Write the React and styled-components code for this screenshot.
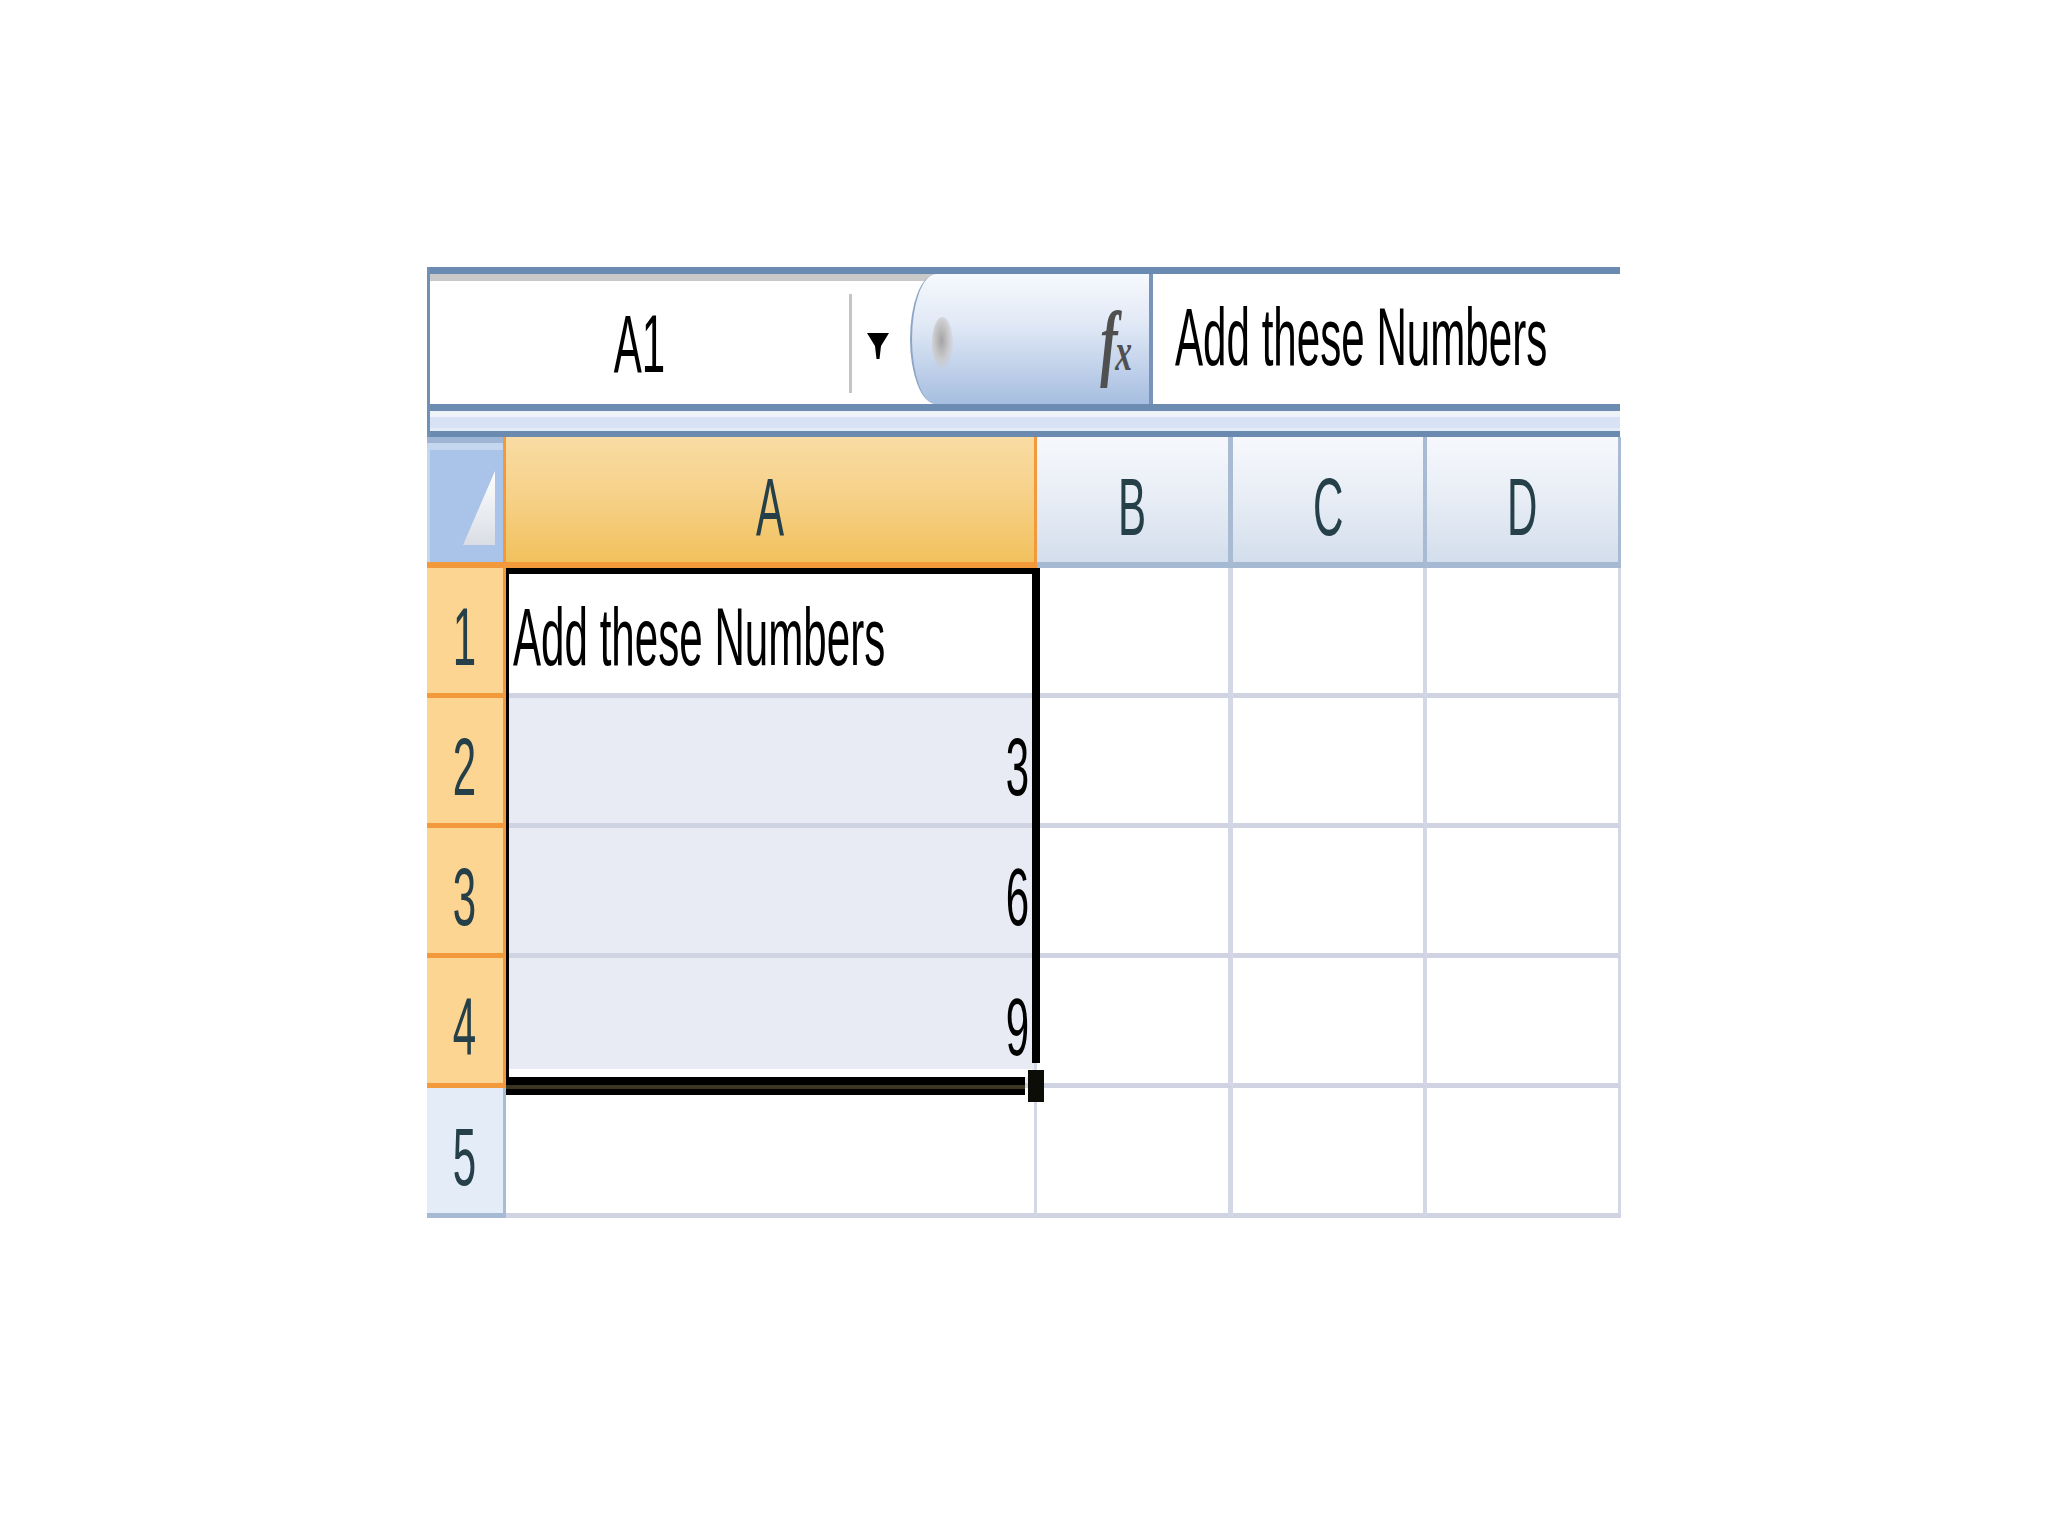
import React from "react";
import styled, { createGlobalStyle } from "styled-components";

const GlobalStyle = createGlobalStyle`
  html, body { margin: 0; padding: 0; background: #ffffff; }
  body { font-family: "Liberation Sans", Arial, sans-serif; }
`;

const Page = styled.div`
  padding-top: 267px;
  display: flex;
  justify-content: center;
`;

const Sheet = styled.div`
  width: 1194px;
  display: flex;
  flex-direction: column;
`;

const FormulaArea = styled.div`
  width: 1190px;
  border-left: 3px solid #7090b6;
  display: flex;
  flex-direction: column;
`;

const FormulaBar = styled.div`
  display: flex;
  height: 130px;
  border-top: 7px solid #6a8ab1;
  border-bottom: 7px solid #6c8cb2;
  background: linear-gradient(#c9c9c9 0 7px, #ffffff 7px);
`;

const NameBox = styled.div`
  width: 480px;
  flex: none;
  display: flex;
  align-items: center;
`;

const NameText = styled.div`
  width: 419px;
  display: flex;
  justify-content: center;
  padding-top: 10px;
  box-sizing: border-box;
`;

const Separator = styled.div`
  width: 3px;
  height: 99px;
  margin-top: 8px;
  background: #c4c4c4;
`;

const ArrowWrap = styled.div`
  padding-left: 15px;
  margin-top: 14px;
  display: flex;
`;

const FxButton = styled.div`
  width: 243px;
  flex: none;
  box-sizing: border-box;
  display: flex;
  align-items: center;
  justify-content: space-between;
  padding: 0 17px 0 20px;
  border-right: 4px solid #7994ba;
  border-left: 2px solid #8ca5c6;
  border-radius: 26px 0 0 26px / 65px 0 0 65px;
  background: linear-gradient(#f6f9fd 0%, #e1e9f6 38%, #a6bee0 100%);
`;

const Knob = styled.div`
  width: 21px;
  height: 52px;
  margin-top: 8px;
  border-radius: 50%;
  background: radial-gradient(ellipse at 45% 45%, #a4a4a4 0%, #c9c9cb 45%, rgba(230, 234, 240, 0) 78%);
`;

const FxGlyph = styled.div`
  display: flex;
  align-items: baseline;
  font-family: "Liberation Serif", "Times New Roman", serif;
  font-style: italic;
  font-weight: bold;
  color: #505050;
  transform: scaleX(0.62);
  transform-origin: right center;
  margin-top: 6px;
  line-height: 1;
`;

const FxF = styled.span`
  font-size: 84px;
`;

const FxX = styled.span`
  font-size: 54px;
  margin-left: -4px;
`;

const FormulaInput = styled.div`
  flex: 1;
  background: #ffffff;
  display: flex;
  align-items: center;
  padding: 0 0 4px 22px;
`;

const Strip = styled.div`
  height: 20px;
  background: linear-gradient(#eef3fa 0 6px, #d7e3f4 6px 17px, #e4ecf7 17px);
  border-bottom: 6px solid #6a8ab0;
`;

const Label = styled.span`
  display: inline-block;
  font-family: "Liberation Sans", Arial, sans-serif;
  font-size: 81px;
  line-height: 1;
  white-space: nowrap;
  color: ${(p) => p.$color || "#000000"};
  transform: scaleX(0.52);
  transform-origin: ${(p) => p.$origin || "center"} center;
`;

const GridWrap = styled.div`
  position: relative;
`;

const Grid = styled.div`
  display: grid;
  grid-template-columns: 79px 531px 196px 194px 194px;
  grid-template-rows: 131px repeat(5, 130px);
`;

const Corner = styled.div`
  box-sizing: border-box;
  border-right: 3px solid #f2993c;
  border-bottom: 6px solid #f2993c;
  background: #a9c3e9;
  box-shadow: inset 0 6px 0 #9fb5d5, inset 0 13px 0 #c5d6ef, inset 3px 0 0 #c5d6ef;
  display: flex;
  align-items: flex-end;
  justify-content: flex-end;
  padding: 0 8px 17px 0;
`;

const CornerTriangle = styled.div`
  width: 32px;
  height: 74px;
  background: linear-gradient(#ffffff, #d9dde4);
  clip-path: polygon(100% 0, 100% 100%, 0 100%);
`;

const ColHeader = styled.div`
  box-sizing: border-box;
  display: flex;
  align-items: center;
  justify-content: center;
  padding-top: 15px;
  border-right: ${(p) => p.$br}px solid ${(p) => (p.$sel ? "#f2993c" : "#a9bbd3")};
  border-bottom: 6px solid ${(p) => (p.$sel ? "#f2993c" : "#a6b9d2")};
  background: ${(p) =>
    p.$sel
      ? "linear-gradient(#f9dca4 0%, #f6d086 50%, #f1c15d 100%)"
      : "linear-gradient(#f6f8fc 0%, #e9eef6 45%, #d3deec 100%)"};
`;

const RowHeader = styled.div`
  box-sizing: border-box;
  display: flex;
  align-items: center;
  justify-content: center;
  padding-top: 14px;
  border-right: 3px solid ${(p) => (p.$sel ? "#f2993c" : "#a8bcd6")};
  border-bottom: 5px solid ${(p) => (p.$sel ? "#f2993c" : "#a7bad3")};
  background: ${(p) => (p.$sel ? "#fdd592" : "#e4ecf7")};
`;

const Cell = styled.div`
  box-sizing: border-box;
  display: flex;
  align-items: center;
  justify-content: ${(p) => (p.$align === "right" ? "flex-end" : "flex-start")};
  padding: 14px 5px 0 7px;
  border-right: ${(p) => p.$br}px solid #d4d8e6;
  border-bottom: 5px solid #d0d4e2;
  background: ${(p) => (p.$tint ? "#e8ebf4" : "#ffffff")};
`;

const Selection = styled.div`
  position: absolute;
  left: 79px;
  top: 131px;
  width: 534px;
  height: 527px;
  pointer-events: none;
`;

const SelEdge = styled.div`
  position: absolute;
  background: ${(p) => p.$bg || "#000000"};
`;

const header = { color: "#26404a" };

const columns = [
  { key: "A", br: 3 },
  { key: "B", br: 5 },
  { key: "C", br: 4 },
  { key: "D", br: 3 },
];

const rows = [
  { n: 1, sel: true, A: { text: "Add these Numbers", align: "left" } },
  { n: 2, sel: true, A: { text: "3", align: "right", tint: true } },
  { n: 3, sel: true, A: { text: "6", align: "right", tint: true } },
  { n: 4, sel: true, A: { text: "9", align: "right", tint: true } },
  { n: 5, sel: false },
];

function DropArrow() {
  return (
    <svg width="22" height="26" viewBox="0 0 22 26">
      <polygon points="0,0 22,0 14,13 12.5,26 9.5,26 8,13" fill="#000" />
    </svg>
  );
}

export default function App() {
  return (
    <>
      <GlobalStyle />
      <Page>
        <Sheet>
          <FormulaArea>
            <FormulaBar>
              <NameBox>
                <NameText>
                  <Label>A1</Label>
                </NameText>
                <Separator />
                <ArrowWrap>
                  <DropArrow />
                </ArrowWrap>
              </NameBox>
              <FxButton>
                <Knob />
                <FxGlyph>
                  <FxF>f</FxF>
                  <FxX>x</FxX>
                </FxGlyph>
              </FxButton>
              <FormulaInput>
                <Label $origin="left">Add these Numbers</Label>
              </FormulaInput>
            </FormulaBar>
            <Strip />
          </FormulaArea>
          <GridWrap>
            <Grid>
              <Corner>
                <CornerTriangle />
              </Corner>
              {columns.map((c) => (
                <ColHeader key={c.key} $br={c.br} $sel={c.key === "A"}>
                  <Label $color={header.color}>{c.key}</Label>
                </ColHeader>
              ))}
              {rows.map((r) => (
                <React.Fragment key={r.n}>
                  <RowHeader $sel={r.sel}>
                    <Label $color={header.color}>{r.n}</Label>
                  </RowHeader>
                  {columns.map((c) => {
                    const v = r[c.key];
                    return (
                      <Cell key={c.key} $br={c.br} $align={v?.align} $tint={v?.tint}>
                        {v && (
                          <Label $origin={v.align === "right" ? "right" : "left"}>{v.text}</Label>
                        )}
                      </Cell>
                    );
                  })}
                </React.Fragment>
              ))}
            </Grid>
            <Selection>
              <SelEdge style={{ left: 0, top: 0, width: 534, height: 6 }} />
              <SelEdge style={{ left: 0, top: 0, width: 3, height: 527 }} />
              <SelEdge style={{ left: 526, top: 0, width: 8, height: 495 }} />
              <SelEdge $bg="#ffffff" style={{ left: 3, top: 501, width: 523, height: 8 }} />
              <SelEdge
                $bg="linear-gradient(#000 0 8px, #3b3621 8px 12px, #000 12px)"
                style={{ left: 0, top: 509, width: 519, height: 18 }}
              />
              <SelEdge $bg="#0d0d08" style={{ left: 522, top: 502, width: 16, height: 32 }} />
            </Selection>
          </GridWrap>
        </Sheet>
      </Page>
    </>
  );
}
